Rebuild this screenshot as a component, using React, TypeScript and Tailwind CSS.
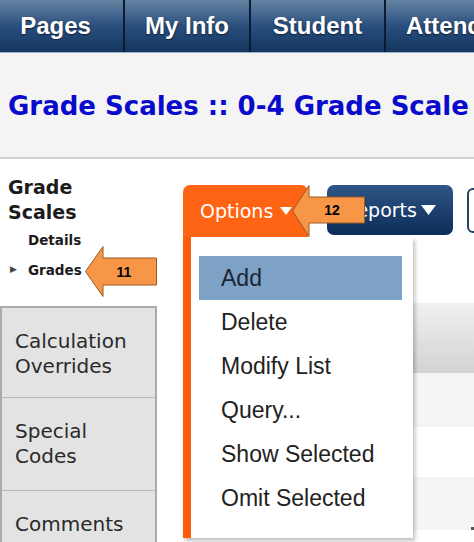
import React from "react";

const tabs = [
  { label: "Pages", cls: "w-[125px] pr-3" },
  { label: "My Info", cls: "w-[126px]" },
  { label: "Student", cls: "w-[135px]" },
  { label: "Attendance", cls: "w-[140px] pl-5 justify-start" },
];

const menuItems = ["Delete", "Modify List", "Query...", "Show Selected", "Omit Selected"];

type CalloutProps = {
  pos: string;
  labelPos: string;
  w: number;
  h: number;
  head: number;
  bodyTop: number;
  bodyBottom: number;
  label: string;
};

// orange annotation arrow pointing left
const Callout = ({ pos, labelPos, w, h, head, bodyTop, bodyBottom, label }: CalloutProps) => {
  const pts = [
    [0.5, h / 2],
    [head, 0.5],
    [head, bodyTop],
    [w - 0.5, bodyTop],
    [w - 0.5, bodyBottom],
    [head, bodyBottom],
    [head, h - 0.5],
  ]
    .map((p) => p.join(","))
    .join(" ");
  return (
    <div className={`absolute ${pos}`}>
      <svg width={w} height={h} className="block">
        <polygon points={pts} fill="#f79646" stroke="#9a5a24" strokeWidth="1" />
      </svg>
      <span
        className={`absolute -translate-x-1/2 -translate-y-1/2 text-[14px] leading-none font-bold text-black font-['Liberation_Sans',Arial,sans-serif] ${labelPos}`}
      >
        {label}
      </span>
    </div>
  );
};

const Caret = ({ w, h }: { w: number; h: number }) => (
  <svg width={w} height={h} viewBox="0 0 12 8" className="block">
    <polygon points="0,0 12,0 6,8" fill="white" />
  </svg>
);

const SideBox = ({ lines, cls }: { lines: string[]; cls: string }) => (
  <div className={`bg-[#e3e3e3] pl-[13px] pt-[21px] text-[20px] leading-[25px] text-[#2a2a2a] ${cls}`}>
    {lines.map((l) => (
      <div key={l}>{l}</div>
    ))}
  </div>
);

export default function App() {
  return (
    <div className="relative w-[474px] h-[542px] overflow-hidden bg-white font-['Liberation_Sans',Arial,sans-serif]">
      {/* top nav */}
      <nav className="flex h-[53px] overflow-hidden bg-linear-to-b from-[#6683a3] via-[#2a4f7e] to-[#14365f] border-b border-[#9db2c8]">
        {tabs.map((t, i) => (
          <div
            key={t.label}
            className={`flex shrink-0 items-center justify-center text-[24px] font-bold text-white [text-shadow:0_1px_2px_rgba(0,0,0,0.6)] ${t.cls} ${
              i < tabs.length - 1 ? "border-r-2 border-[#0b1c30]" : ""
            }`}
          >
            <span className="whitespace-nowrap">{t.label}</span>
          </div>
        ))}
      </nav>

      {/* title band */}
      <div className="h-[106px] bg-[#f4f4f4] border-b-2 border-[#d0d0d0] pl-2 pt-[38px]">
        <h1 className="text-[26px] leading-[30px] font-bold text-[#0a0acc] whitespace-nowrap font-['DejaVu_Sans',Verdana,sans-serif]">
          Grade Scales :: 0-4 Grade Scale
        </h1>
      </div>

      <div className="flex">
        {/* sidebar */}
        <aside className="w-[157px] shrink-0 pt-4 font-['DejaVu_Sans',Verdana,sans-serif]">
          <div className="pl-2 text-[19px] leading-[25px] font-bold text-[#1c1c1c]">
            <div>Grade</div>
            <div>Scales</div>
          </div>
          <div className="pl-7 text-[13.5px] leading-[30px] font-bold text-[#1c1c1c]">Details</div>
          <div className="flex items-center pl-[10px] h-[30px] text-[13.5px] font-bold text-[#1c1c1c]">
            <span className="w-[18px] text-[9px] text-[#444]">▶</span>
            <span>Grades</span>
          </div>
          <div className="mt-[21px] border-2 border-[#ababab] border-b-0">
            <SideBox lines={["Calculation", "Overrides"]} cls="h-[90px] border-b border-[#b9b9b9]" />
            <SideBox lines={["Special", "Codes"]} cls="h-[93px] border-b border-[#b9b9b9]" />
            <SideBox lines={["Comments"]} cls="h-[60px]" />
          </div>
        </aside>

        {/* main */}
        <main className="flex-1 min-w-0 pl-[26px] pt-[26px]">
          <div className="flex items-start font-['DejaVu_Sans',Verdana,sans-serif]">
            <div className="relative shrink-0">
              <button className="flex items-center gap-[7px] w-[125px] h-[52px] pl-[17px] rounded-t-[7px] bg-[#ff6414] text-[19px] text-white">
                Options
                <Caret w={12} h={8} />
              </button>

              {/* dropdown */}
              <div className="absolute left-0 top-full z-10 w-[230px] h-[301px] bg-white border-l-8 border-[#ff5c0a] shadow-[2px_3px_4px_rgba(0,0,0,0.25)] pt-[19px] font-['Liberation_Sans',Arial,sans-serif]">
                <div className="ml-2 w-[203px] h-[44px] flex items-center pl-[22px] bg-[#7ea2c6] text-[23px] text-[#1b2635]">
                  Add
                </div>
                {menuItems.map((m) => (
                  <div key={m} className="h-[44px] flex items-center pl-[30px] text-[23px] text-[#222]">
                    {m}
                  </div>
                ))}
              </div>
            </div>

            <button className="ml-[19px] shrink-0 flex items-center justify-center gap-1 w-[126px] h-[50px] rounded-[7px] bg-linear-to-b from-[#2f5687] to-[#0c2d59] text-[19px] text-white">
              Reports
              <Caret w={15} h={10} />
            </button>
            <div className="ml-[14px] shrink-0 w-[60px] h-[45px] mt-[3px] rounded-[6px] border-2 border-[#25436b] bg-white" />
          </div>

          {/* grid behind the menu */}
          <div className="mt-[66px]">
            <div className="h-[70px] bg-linear-to-b from-[#f0f0f0] to-[#d3d3d3]" />
            <div className="h-[54px] bg-[#f5f5f5]" />
            <div className="h-[50px] bg-white" />
            <div className="h-[53px] bg-[#f5f5f5] relative">
              <div className="absolute right-0 bottom-0 w-[3px] h-[3px] bg-[#555]" />
            </div>
            <div className="h-[20px] bg-white" />
          </div>
        </main>
      </div>

      <Callout pos="left-[85px] top-[246px]" labelPos="left-[39px] top-[26px]" w={72} h={51} head={18} bodyTop={12} bodyBottom={39} label="11" />
      <Callout pos="left-[292px] top-[185px]" labelPos="left-[40px] top-[25px]" w={73} h={52} head={17} bodyTop={12} bodyBottom={38} label="12" />
      <Callout pos="left-[267px] top-[255px]" labelPos="left-[39px] top-[27px]" w={73} h={53} head={18} bodyTop={12} bodyBottom={42} label="13" />
    </div>
  );
}
